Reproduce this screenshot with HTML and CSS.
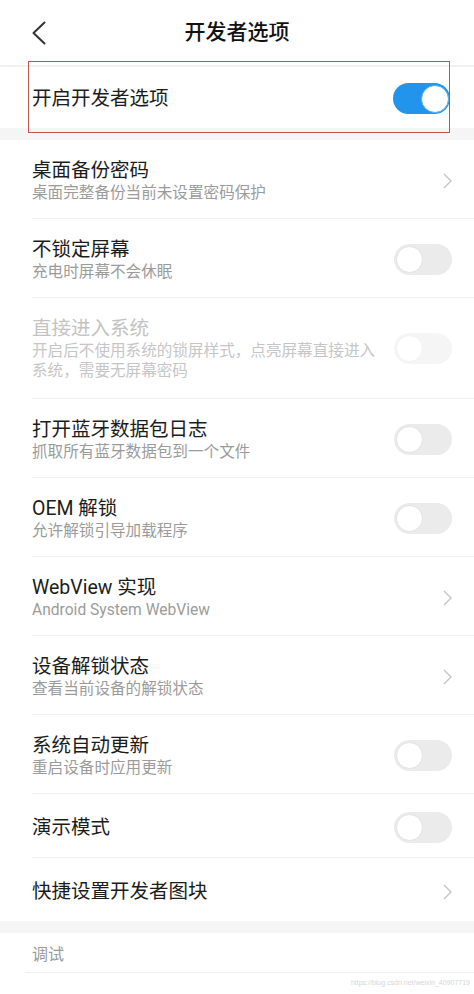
FILE: index.html
```html
<!DOCTYPE html>
<html lang="zh-CN">
<head>
<meta charset="utf-8">
<title>开发者选项</title>
<link rel="stylesheet" href="styles.css">
</head>
<body>
<div class="screen">
  <header class="topbar">
    <svg class="back" width="14" height="24" viewBox="0 0 14 24"><polyline points="12.5,1.5 1.5,12 12.5,22.5" fill="none" stroke="#333" stroke-width="2" stroke-linecap="round" stroke-linejoin="round"/></svg>
    <h1 class="title">开发者选项</h1>
  </header>

  <div class="master">
    <span class="master-label">开启开发者选项</span>
    <span class="switch on"><span class="knob"></span></span>
  </div>
  <div class="mark"></div>

  <div class="band"></div>

  <ul class="list">
    <li class="row">
      <div class="text"><div class="t">桌面备份密码</div><div class="s">桌面完整备份当前未设置密码保护</div></div>
      <svg class="chev" width="9" height="16" viewBox="0 0 9 16"><polyline points="1,1 8,8 1,15" fill="none" stroke="#c4c4c4" stroke-width="1.4"/></svg>
    </li>
    <li class="row">
      <div class="text"><div class="t">不锁定屏幕</div><div class="s">充电时屏幕不会休眠</div></div>
      <span class="switch"><span class="knob"></span></span>
    </li>
    <li class="row disabled">
      <div class="text"><div class="t">直接进入系统</div><div class="s">开启后不使用系统的锁屏样式，点亮屏幕直接进入系统，需要无屏幕密码</div></div>
      <span class="switch"><span class="knob"></span></span>
    </li>
    <li class="row">
      <div class="text"><div class="t">打开蓝牙数据包日志</div><div class="s">抓取所有蓝牙数据包到一个文件</div></div>
      <span class="switch"><span class="knob"></span></span>
    </li>
    <li class="row">
      <div class="text"><div class="t">OEM 解锁</div><div class="s">允许解锁引导加载程序</div></div>
      <span class="switch"><span class="knob"></span></span>
    </li>
    <li class="row">
      <div class="text"><div class="t">WebView 实现</div><div class="s">Android System WebView</div></div>
      <svg class="chev" width="9" height="16" viewBox="0 0 9 16"><polyline points="1,1 8,8 1,15" fill="none" stroke="#c4c4c4" stroke-width="1.4"/></svg>
    </li>
    <li class="row">
      <div class="text"><div class="t">设备解锁状态</div><div class="s">查看当前设备的解锁状态</div></div>
      <svg class="chev" width="9" height="16" viewBox="0 0 9 16"><polyline points="1,1 8,8 1,15" fill="none" stroke="#c4c4c4" stroke-width="1.4"/></svg>
    </li>
    <li class="row">
      <div class="text"><div class="t">系统自动更新</div><div class="s">重启设备时应用更新</div></div>
      <span class="switch"><span class="knob"></span></span>
    </li>
    <li class="row single">
      <div class="text"><div class="t">演示模式</div></div>
      <span class="switch"><span class="knob"></span></span>
    </li>
    <li class="row single last">
      <div class="text"><div class="t">快捷设置开发者图块</div></div>
      <svg class="chev" width="9" height="16" viewBox="0 0 9 16"><polyline points="1,1 8,8 1,15" fill="none" stroke="#c4c4c4" stroke-width="1.4"/></svg>
    </li>
  </ul>

  <div class="band"></div>
  <div class="section">调试</div>
  <div class="watermark">https://blog.csdn.net/weixin_40907719</div>
</div>
</body>
</html>
```

FILE: styles.css
```css
* { box-sizing: border-box; }
html, body { margin: 0; padding: 0; background: #fff; }
body {
  font-family: Roboto, "Noto Sans CJK SC", sans-serif;
  color: #1c1c1c;
  width: 474px;
  height: 994px;
  overflow: hidden;
}
.screen { position: relative; width: 474px; height: 994px; }

.topbar {
  position: relative;
  height: 67px;
  display: flex;
  align-items: center;
  justify-content: center;
  border-bottom: 2px solid #f1f1f1;
}
.back { position: absolute; left: 32px; top: 21px; }
.title {
  margin: 0;
  font-size: 21px;
  font-weight: 500;
  color: #111;
  line-height: 28px;
  padding-bottom: 2px;
}

.master {
  height: 61px;
  display: flex;
  align-items: center;
  justify-content: space-between;
  padding: 2px 24px 0 32px;
}
.master-label { font-size: 19.5px; line-height: 25px; color: #1c1c1c; }

.mark {
  position: absolute;
  left: 28px;
  top: 61px;
  width: 422px;
  height: 72px;
  border: 1.5px solid #c2524c;
  pointer-events: none;
}

.band { height: 12px; background: #f5f5f5; }

.list { list-style: none; margin: 0; padding: 0; }
.row {
  display: flex;
  align-items: center;
  justify-content: space-between;
  gap: 14px;
  margin-left: 32px;
  padding: 18px 22px 15px 0;
  border-bottom: 1px solid #f0f0f0;
}
.row.disabled { padding-bottom: 17px; }
.row.single { padding: 18px 22px 14px 0; min-height: 64px; }
.row.last { border-bottom: none; min-height: 63px; }
.text { flex: 1; min-width: 0; }
.t { font-size: 19.5px; line-height: 25px; color: #1c1c1c; }
.s { font-size: 15.6px; line-height: 20px; color: #9b9b9b; }
.row.disabled .t { color: #c3c3c3; }
.row.disabled .s { color: #c6c6c6; }
.row.disabled .switch { opacity: 0.45; }

.chev { flex: none; }

.switch {
  flex: none;
  position: relative;
  width: 58px;
  height: 31px;
  border-radius: 16px;
  background: #ebebeb;
  display: flex;
  align-items: center;
  padding: 0 2px;
}
.switch .knob {
  width: 27px;
  height: 27px;
  border-radius: 50%;
  background: #fff;
  border: 1px solid #e2e2e2;
}
.switch.on { width: 57px; background: #2394ec; justify-content: flex-end; padding: 0 1px; }
.switch.on .knob { border: 1.5px solid #5aa9e6; width: 28px; height: 28px; }

.section {
  height: 40px;
  display: flex;
  align-items: center;
  margin-left: 25px;
  padding-left: 7px;
  font-size: 16px;
  color: #9b9b9b;
  border-bottom: 1px solid #f0f0f0;
}

.watermark {
  position: absolute;
  right: 4px;
  top: 979px;
  font-family: "Liberation Sans", sans-serif;
  font-size: 7px;
  color: #d6d6d6;
  white-space: nowrap;
}
```
